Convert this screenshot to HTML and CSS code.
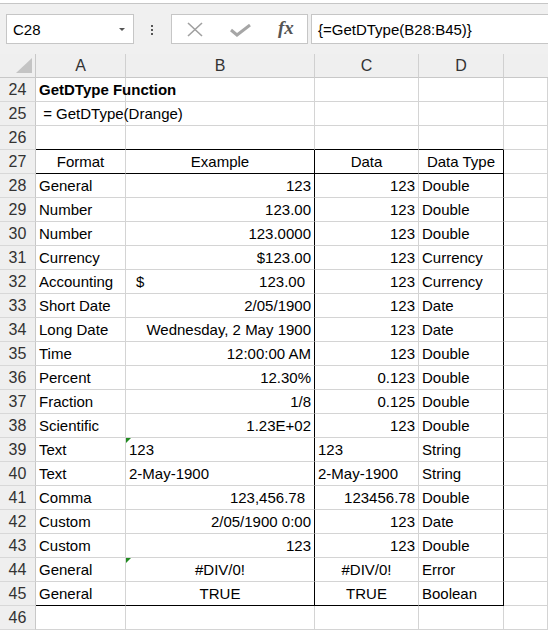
FILE: index.html
```html
<!DOCTYPE html>
<html lang="en">
  <head>
    <meta charset="UTF-8" />
    <title>GetDType Function</title>
    <link rel="stylesheet" href="styles.css">
  </head>
  <body>
    <div class="toolbar">
      <div class="name-box">C28<span class="drop"></span></div>
      <div class="dots"><i></i><i></i><i></i></div>
      <div class="buttons">
        <svg class="btn-x" width="18" height="15" viewBox="0 0 18 15">
          <path d="M2 1 L16 14 M16 1 L2 14" stroke="#a0a0a0" stroke-width="1.6" fill="none" />
        </svg>
        <svg class="btn-ok" width="21" height="13" viewBox="0 0 21 13">
          <path d="M1 6 L7 11 L20 1" stroke="#a6a6a6" stroke-width="3" fill="none" />
        </svg>
        <span class="fx">fx</span>
      </div>
      <div class="formula">{=GetDType(B28:B45)}</div>
    </div>

    <div class="sheet">
      <div class="hd corner"><svg width="16" height="15" viewBox="0 0 16 15"><polygon points="16,0 16,15 0,15" fill="#c4c4c4" /></svg></div>
      <div class="hd col">A</div>
      <div class="hd col">B</div>
      <div class="hd col">C</div>
      <div class="hd col">D</div>
      <div class="hd col last"></div>

      <div class="hd row">24</div>
      <div class="cell bold">GetDType Function</div><div class="cell"></div><div class="cell"></div><div class="cell"></div><div class="cell"></div>

      <div class="hd row">25</div>
      <div class="cell">&nbsp;= GetDType(Drange)</div><div class="cell"></div><div class="cell"></div><div class="cell"></div><div class="cell"></div>

      <div class="hd row">26</div>
      <div class="cell bb"></div><div class="cell bb"></div><div class="cell bb"></div><div class="cell bb"></div><div class="cell"></div>

      <div class="hd row">27</div>
      <div class="cell c bb">Format</div><div class="cell c bb br">Example</div><div class="cell c bb">Data</div><div class="cell c bb br">Data Type</div><div class="cell"></div>

      <div class="hd row">28</div>
      <div class="cell">General</div><div class="cell r br">123</div><div class="cell r">123</div><div class="cell br">Double</div><div class="cell"></div>

      <div class="hd row">29</div>
      <div class="cell">Number</div><div class="cell r br">123.00</div><div class="cell r">123</div><div class="cell br">Double</div><div class="cell"></div>

      <div class="hd row">30</div>
      <div class="cell">Number</div><div class="cell r br">123.0000</div><div class="cell r">123</div><div class="cell br">Double</div><div class="cell"></div>

      <div class="hd row">31</div>
      <div class="cell">Currency</div><div class="cell r br">$123.00</div><div class="cell r">123</div><div class="cell br">Currency</div><div class="cell"></div>

      <div class="hd row">32</div>
      <div class="cell">Accounting</div><div class="cell acct br"><span>$</span><span>123.00</span></div><div class="cell r">123</div><div class="cell br">Currency</div><div class="cell"></div>

      <div class="hd row">33</div>
      <div class="cell">Short Date</div><div class="cell r br">2/05/1900</div><div class="cell r">123</div><div class="cell br">Date</div><div class="cell"></div>

      <div class="hd row">34</div>
      <div class="cell">Long Date</div><div class="cell r br">Wednesday, 2 May 1900</div><div class="cell r">123</div><div class="cell br">Date</div><div class="cell"></div>

      <div class="hd row">35</div>
      <div class="cell">Time</div><div class="cell r br">12:00:00 AM</div><div class="cell r">123</div><div class="cell br">Double</div><div class="cell"></div>

      <div class="hd row">36</div>
      <div class="cell">Percent</div><div class="cell r br">12.30%</div><div class="cell r">0.123</div><div class="cell br">Double</div><div class="cell"></div>

      <div class="hd row">37</div>
      <div class="cell">Fraction</div><div class="cell r br">1/8</div><div class="cell r">0.125</div><div class="cell br">Double</div><div class="cell"></div>

      <div class="hd row">38</div>
      <div class="cell">Scientific</div><div class="cell r br">1.23E+02</div><div class="cell r">123</div><div class="cell br">Double</div><div class="cell"></div>

      <div class="hd row">39</div>
      <div class="cell">Text</div><div class="cell br flag">123</div><div class="cell">123</div><div class="cell br">String</div><div class="cell"></div>

      <div class="hd row">40</div>
      <div class="cell">Text</div><div class="cell br">2-May-1900</div><div class="cell">2-May-1900</div><div class="cell br">String</div><div class="cell"></div>

      <div class="hd row">41</div>
      <div class="cell">Comma</div><div class="cell r pad br">123,456.78</div><div class="cell r">123456.78</div><div class="cell br">Double</div><div class="cell"></div>

      <div class="hd row">42</div>
      <div class="cell">Custom</div><div class="cell r br">2/05/1900 0:00</div><div class="cell r">123</div><div class="cell br">Date</div><div class="cell"></div>

      <div class="hd row">43</div>
      <div class="cell">Custom</div><div class="cell r br">123</div><div class="cell r">123</div><div class="cell br">Double</div><div class="cell"></div>

      <div class="hd row">44</div>
      <div class="cell">General</div><div class="cell c br flag">#DIV/0!</div><div class="cell c">#DIV/0!</div><div class="cell br">Error</div><div class="cell"></div>

      <div class="hd row">45</div>
      <div class="cell bb">General</div><div class="cell c bb br">TRUE</div><div class="cell c bb">TRUE</div><div class="cell bb br">Boolean</div><div class="cell"></div>

      <div class="hd row">46</div>
      <div class="cell"></div><div class="cell"></div><div class="cell"></div><div class="cell"></div><div class="cell"></div>
    </div>
  </body>
</html>
```

FILE: styles.css
```css
body {
  margin: 0;
  background-color: #ffffff;
  font-family: "Liberation Sans", Arial, sans-serif;
  font-size: 15px;
  color: #000;
  overflow: hidden;
}

/* formula bar */
.toolbar {
  margin-top: 3px;
  height: 51px;
  box-sizing: border-box;
  border-top: 1px solid #c6c6c6;
  background-color: #f0f0f0;
  display: flex;
  align-items: flex-start;
  padding-top: 10px;
}

.name-box {
  margin-left: 6px;
  width: 128px;
  height: 30px;
  box-sizing: border-box;
  border: 1px solid #c6c6c6;
  background-color: #fff;
  padding-left: 6px;
  display: flex;
  align-items: center;
  position: relative;
}

.drop {
  position: absolute;
  right: 8px;
  top: 13px;
  border-left: 3px solid transparent;
  border-right: 3px solid transparent;
  border-top: 3px solid #555;
}

.dots {
  margin-left: 17px;
  margin-top: 11px;
  display: flex;
  flex-direction: column;
  gap: 2px;
}

.dots i {
  display: block;
  width: 2px;
  height: 2px;
  background-color: #555;
}

.buttons {
  margin-left: 18px;
  width: 137px;
  height: 30px;
  box-sizing: border-box;
  border: 1px solid #c6c6c6;
  background-color: #fff;
  display: flex;
  align-items: center;
  position: relative;
}

.btn-x {
  margin-left: 14px;
}

.btn-ok {
  margin-left: 26px;
  margin-top: 2px;
}

.fx {
  margin-left: 27px;
  font-family: "Liberation Serif", "Times New Roman", serif;
  font-style: italic;
  font-weight: bold;
  font-size: 19px;
  color: #555;
  margin-top: -2px;
}

.formula {
  margin-left: 3px;
  margin-right: -3px;
  flex: 1;
  height: 30px;
  box-sizing: border-box;
  border: 1px solid #c6c6c6;
  background-color: #fff;
  padding-left: 6px;
  display: flex;
  align-items: center;
}

/* grid */
.sheet {
  display: grid;
  grid-template-columns: 36px 90px 189px 104px 85px 1fr;
  grid-auto-rows: 24px;
}

.hd {
  background-color: #efefef;
  color: #333;
  font-size: 16px;
  box-sizing: border-box;
  display: flex;
  align-items: flex-end;
  justify-content: center;
  padding-bottom: 3px;
  line-height: 16px;
}

.hd.col {
  border-right: 1px solid #d0d0d0;
  border-bottom: 1px solid #c8c8c8;
}

.hd.col.last {
  border-right: none;
}

.hd.row {
  border-right: 1px solid #c8c8c8;
  border-bottom: 1px solid #d8d8d8;
}

.hd.corner {
  border-right: 1px solid #c8c8c8;
  border-bottom: 1px solid #c8c8c8;
  align-items: flex-start;
  justify-content: flex-end;
  padding: 4px 3px 0 0;
}

.cell {
  box-sizing: border-box;
  border-right: 1px solid #d4d4d4;
  border-bottom: 1px solid #d4d4d4;
  padding: 0 3px 3px 3px;
  display: flex;
  align-items: flex-end;
  line-height: 16px;
  white-space: nowrap;
  position: relative;
}

.bold {
  font-weight: bold;
}

.r {
  justify-content: flex-end;
}

.c {
  justify-content: center;
}

.pad {
  padding-right: 9px;
}

.acct {
  justify-content: space-between;
  padding-left: 10px;
  padding-right: 9px;
}

.br {
  border-right-color: #000;
}

.bb {
  border-bottom-color: #000;
}

/* error indicator */
.flag::before {
  content: "";
  position: absolute;
  left: 0;
  top: 0;
  border-top: 5px solid #1f8a1f;
  border-right: 5px solid transparent;
}
```
